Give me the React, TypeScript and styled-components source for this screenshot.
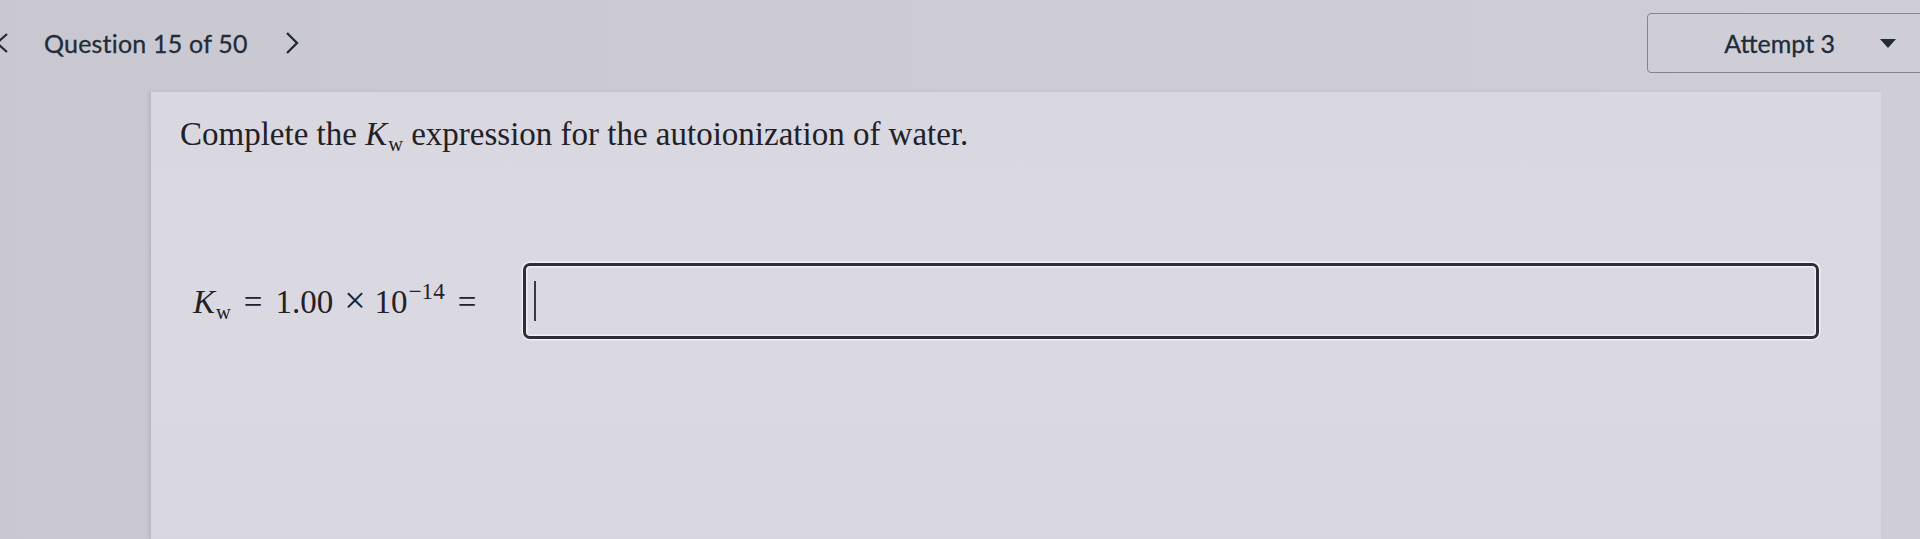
import React from "react";
import styled, { createGlobalStyle } from "styled-components";

const GlobalStyle = createGlobalStyle`
   html, body {
      margin: 0;
      padding: 0;
      background: #cbcad2;
      overflow: hidden;
   }

   #root {
      width: 1920px;
      height: 539px;
      overflow: hidden;
   }
`;

const Page = styled.div`
   width: 1920px;
   height: 539px;
   display: flex;
   flex-direction: column;
   background: linear-gradient(90deg, #c9c8d0 0%, #cdccd4 50%, #cfced6 100%);
   overflow: hidden;
`;

const TopBar = styled.div`
   height: 60px;
   margin-top: 13px;
   display: flex;
   align-items: center;
   justify-content: space-between;
   font-family: Lato, "Noto Sans", sans-serif;
   color: #222c38;
`;

const Nav = styled.div`
   display: flex;
   align-items: center;
   height: 100%;
`;

const NavTitle = styled.span`
   font-size: 25px;
   margin-left: 36px;
   margin-right: 36px;
   letter-spacing: 0.2px;
   -webkit-text-stroke: 0.3px #222c38;
`;

const Chevron = styled.svg`
   display: block;
   flex-shrink: 0;
`;

const AttemptBox = styled.div`
   width: 290px;
   height: 60px;
   box-sizing: border-box;
   margin-right: -17px;
   border: 1.5px solid #85848c;
   border-radius: 4px;
   background: #cfced6;
   display: flex;
   align-items: center;
   justify-content: flex-end;
   padding-right: 40px;
   gap: 45px;
`;

const AttemptLabel = styled.span`
   font-size: 25px;
   -webkit-text-stroke: 0.3px #222c38;
`;

const Caret = styled.span`
   width: 0;
   height: 0;
   border-left: 8px solid transparent;
   border-right: 8px solid transparent;
   border-top: 9px solid #222c38;
`;

const Card = styled.div`
   margin-top: 19px;
   margin-left: 151px;
   width: 1730px;
   flex: 1;
   background: linear-gradient(180deg, #d9d8e0 0%, #dad9e1 60%, #d8d7df 100%);
   box-shadow: -2px 0 3px rgba(120, 118, 130, 0.25);
   box-sizing: border-box;
   padding: 22px 0 0 29px;
   font-family: "Liberation Serif", "Times New Roman", serif;
   color: #222127;
`;

const Prompt = styled.p`
   margin: 0;
   font-size: 33px;
   line-height: 40px;
`;

const Italic = styled.i`
   font-style: italic;
`;

const Sub = styled.sub`
   font-size: 0.62em;
   vertical-align: -0.28em;
   margin-left: 1px;
`;

const Sup = styled.sup`
   font-size: 0.7em;
   vertical-align: 0.58em;
   margin-left: 1px;
`;

const EquationRow = styled.div`
   margin-top: 99px;
   display: flex;
   align-items: center;
   height: 76px;
`;

const Equation = styled.span`
   font-size: 33px;
   margin-left: 13px;
   white-space: nowrap;
`;

const Op = styled.span<{ $big?: boolean }>`
   margin: ${(props) => (props.$big ? "0 9px 0 11px" : "0 13px")};
   font-size: ${(props) => (props.$big ? "1.15em" : "1em")};
`;

const AnswerBox = styled.div`
   margin-left: 34px;
   width: 1296px;
   height: 76px;
   box-sizing: border-box;
   border: 3px solid #2f2e34;
   border-radius: 7px;
   box-shadow: 0 0 0 1.5px rgba(250, 250, 255, 0.7),
      inset 0 0 0 1.5px rgba(250, 250, 255, 0.7);
   display: flex;
   align-items: center;
   padding-left: 8px;
`;

const Cursor = styled.span`
   width: 2px;
   height: 40px;
   background: #3a393f;
`;

const App: React.FC = () => {
   return (
      <>
         <GlobalStyle />
         <Page>
            <TopBar>
               <Nav>
                  <Chevron width="8" height="24" viewBox="0 0 8 24">
                     <path d="M7 3 L-3 12 L7 21" fill="none" stroke="#222c38" strokeWidth="2.2" />
                  </Chevron>
                  <NavTitle>Question 15 of 50</NavTitle>
                  <Chevron width="16" height="24" viewBox="0 0 16 24">
                     <path d="M3 2 L13 12 L3 22" fill="none" stroke="#222c38" strokeWidth="2.4" />
                  </Chevron>
               </Nav>
               <AttemptBox>
                  <AttemptLabel>Attempt 3</AttemptLabel>
                  <Caret />
               </AttemptBox>
            </TopBar>
            <Card>
               <Prompt>
                  Complete the <Italic>K</Italic>
                  <Sub>w</Sub> expression for the autoionization of water.
               </Prompt>
               <EquationRow>
                  <Equation>
                     <Italic>K</Italic>
                     <Sub>w</Sub>
                     <Op>=</Op>1.00<Op $big>×</Op>10<Sup>−14</Sup>
                     <Op>=</Op>
                  </Equation>
                  <AnswerBox>
                     <Cursor />
                  </AnswerBox>
               </EquationRow>
            </Card>
         </Page>
      </>
   );
};

export default App;
